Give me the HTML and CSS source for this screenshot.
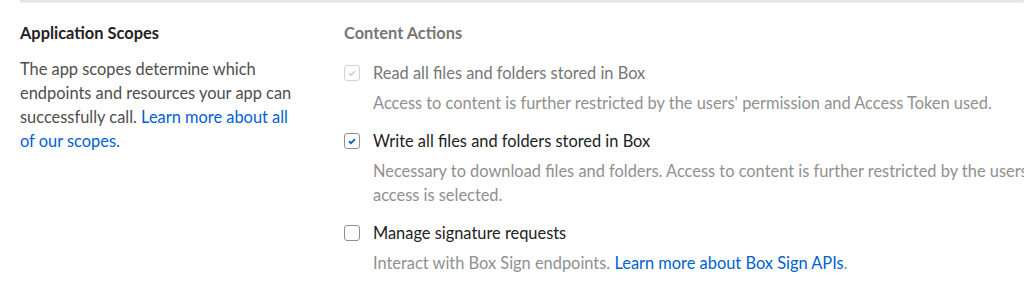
FILE: index.html
```html
<!DOCTYPE html>
<html lang="en">
<head>
  <meta charset="UTF-8">
  <title>Application Scopes</title>
  <link rel="stylesheet" href="styles.css">
</head>
<body>

  <div class="section">
    <div class="section-info">
      <h3 class="section-title">Application Scopes</h3>
      <p class="section-desc">
        The app scopes determine which endpoints and resources your app can successfully call.
        <a href="#" class="link">Learn more about all of our scopes.</a>
      </p>
    </div>

    <div class="section-body">
      <h4 class="group-title">Content Actions</h4>

      <ul class="scope-list">
        <li class="scope-item is-disabled">
          <label class="scope-label">
            <span class="checkbox checked"><svg viewBox="0 0 16 16"><path d="M4.5 8.2l2.3 2.3 4.6-4.6"/></svg></span>
            Read all files and folders stored in Box
          </label>
          <div class="scope-help">Access to content is further restricted by the users' permission and Access Token used.</div>
        </li>
        <li class="scope-item">
          <label class="scope-label">
            <span class="checkbox checked"><svg viewBox="0 0 16 16"><path d="M4.5 8.2l2.3 2.3 4.6-4.6"/></svg></span>
            Write all files and folders stored in Box
          </label>
          <div class="scope-help">Necessary to download files and folders. Access to content is further restricted by the users' permission and Access Token used if read access is selected.</div>
        </li>
        <li class="scope-item">
          <label class="scope-label">
            <span class="checkbox"></span>
            Manage signature requests
          </label>
          <div class="scope-help">Interact with Box Sign endpoints. <a href="#" class="link">Learn more about Box Sign APIs</a>.</div>
        </li>
      </ul>
    </div>
  </div>

</body>
</html>
```

FILE: styles.css
```css
body {
  margin: 0;
  font-family: Lato, "Open Sans", sans-serif;
  font-size: 16.4px;
  background: #fff;
  color: #222;
  overflow: hidden;
}

/* Section with the top divider */
.section {
  display: flex;
  gap: 44px;
  margin-left: 20px;
  padding-top: 21px;
  border-top: 2px solid #e4e4e4;
  box-shadow: inset 0 1px 1px #eee;
}

.section-info {
  flex: 0 0 280px;
}

.section-title {
  margin: 0;
  font-size: 16.4px;
  font-weight: bold;
  line-height: 20px;
  color: #222;
}

.section-desc {
  margin: 14px 0 0;
  line-height: 24px;
  color: #4e4e4e;
}

.link {
  color: #0061d5;
  text-decoration: none;
}

.section-body {
  flex: 1;
  min-width: 0;
  overflow: hidden;
  white-space: nowrap;
}

.group-title {
  margin: 0;
  font-size: 16.4px;
  font-weight: bold;
  line-height: 20px;
  color: #767676;
}

.scope-list {
  list-style: none;
  margin: 19px 0 0;
  padding: 0;
}

.scope-item {
  margin-bottom: 15px;
}

.scope-label {
  display: flex;
  align-items: center;
  line-height: 22px;
  color: #222;
}

.checkbox {
  box-sizing: border-box;
  width: 16px;
  height: 16px;
  margin-right: 13px;
  border: 1px solid #909090;
  border-radius: 3px;
  background: #fff;
}

.checkbox svg {
  display: block;
  width: 14px;
  height: 14px;
  fill: none;
  stroke: #0061d5;
  stroke-width: 2;
}

.is-disabled .scope-label {
  color: #767676;
}

.is-disabled .checkbox {
  border-color: #d3d3d3;
}

.is-disabled .checkbox svg {
  stroke: #c4c4c4;
  stroke-width: 1.5;
}

.scope-help {
  margin: 7px 0 0 29px;
  line-height: 24px;
  color: #909090;
  white-space: normal;
  width: 990px;
}
```
